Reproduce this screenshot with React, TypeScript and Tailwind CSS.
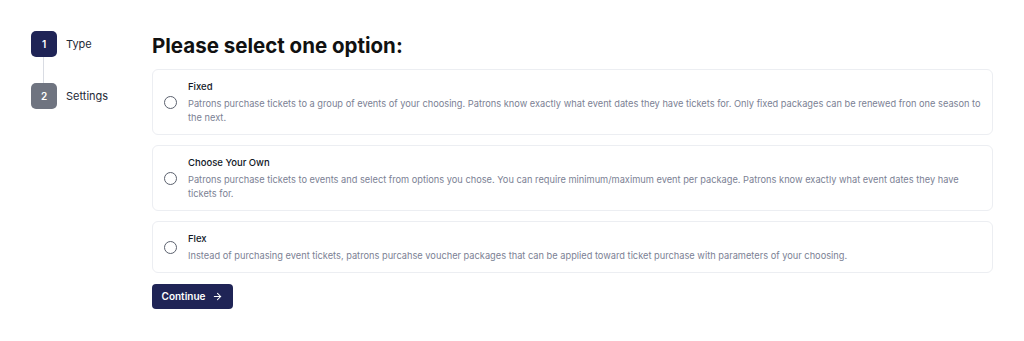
import { ArrowRight } from "lucide-react";

type Option = {
  id: string;
  title: string;
  description: string;
};

const OPTIONS: Option[] = [
  {
    id: "fixed",
    title: "Fixed",
    description:
      "Patrons purchase tickets to a group of events of your choosing. Patrons know exactly what event dates they have tickets for. Only fixed packages can be renewed fron one season to the next.",
  },
  {
    id: "choose",
    title: "Choose Your Own",
    description:
      "Patrons purchase tickets to events and select from options you chose. You can require minimum/maximum event per package. Patrons know exactly what event dates they have tickets for.",
  },
  {
    id: "flex",
    title: "Flex",
    description:
      "Instead of purchasing event tickets, patrons purcahse voucher packages that can be applied toward ticket purchase with parameters of your choosing.",
  },
];

function Steps() {
  return (
    <div className="w-[121px] shrink-0">
      <div className="flex items-center gap-[9px]">
        <div className="flex h-[26px] w-[26px] items-center justify-center rounded-[5px] bg-[#1f2456] text-[10px] font-semibold text-white">
          1
        </div>
        <span className="text-[11px] text-[#1f2937]">Type</span>
      </div>
      <div className="ml-[12px] h-[26px] w-px bg-[#d9dce3]" />
      <div className="flex items-center gap-[9px]">
        <div className="flex h-[26px] w-[26px] items-center justify-center rounded-[5px] bg-[#6f7480] text-[10px] font-semibold text-white">
          2
        </div>
        <span className="text-[11px] text-[#1f2937]">Settings</span>
      </div>
    </div>
  );
}

function OptionCard({ option }: { option: Option }) {
  return (
    <label className="flex cursor-pointer items-center gap-[11px] rounded-[6px] border border-[#eceef2] bg-white pb-[9px] pl-[11px] pr-[6px] pt-[10px]">
      <span className="h-[13px] w-[13px] shrink-0 rounded-full border-[1.5px] border-[#5b616e]" />
      <div className="flex flex-col gap-[3px]">
        <span className="text-[9.5px] font-medium leading-[14px] text-[#111827]">{option.title}</span>
        <p className="text-[9.25px] leading-[14px] text-[#7b8194]">{option.description}</p>
      </div>
    </label>
  );
}

export default function App() {
  return (
    <div
      className="flex h-[341px] bg-white pl-[31px] pt-[31px]"
      style={{ fontFamily: "Inter, 'Noto Sans', sans-serif" }}
    >
      <Steps />
      <div className="w-[841px]">
        <h1 className="mb-[9px] mt-px text-[20.5px] font-bold leading-[28px] text-[#111111]">
          Please select one option:
        </h1>
        <div className="flex flex-col gap-[10px]">
          {OPTIONS.map((o) => (
            <OptionCard key={o.id} option={o} />
          ))}
          <div className="mt-px">
            <button
              type="button"
              className="flex h-[25px] w-[81px] items-center justify-center gap-[7px] rounded-[4px] bg-[#1f2456] text-[10px] font-semibold text-white"
            >
              Continue
              <ArrowRight className="h-[11px] w-[11px]" strokeWidth={2.2} />
            </button>
          </div>
        </div>
      </div>
    </div>
  );
}
